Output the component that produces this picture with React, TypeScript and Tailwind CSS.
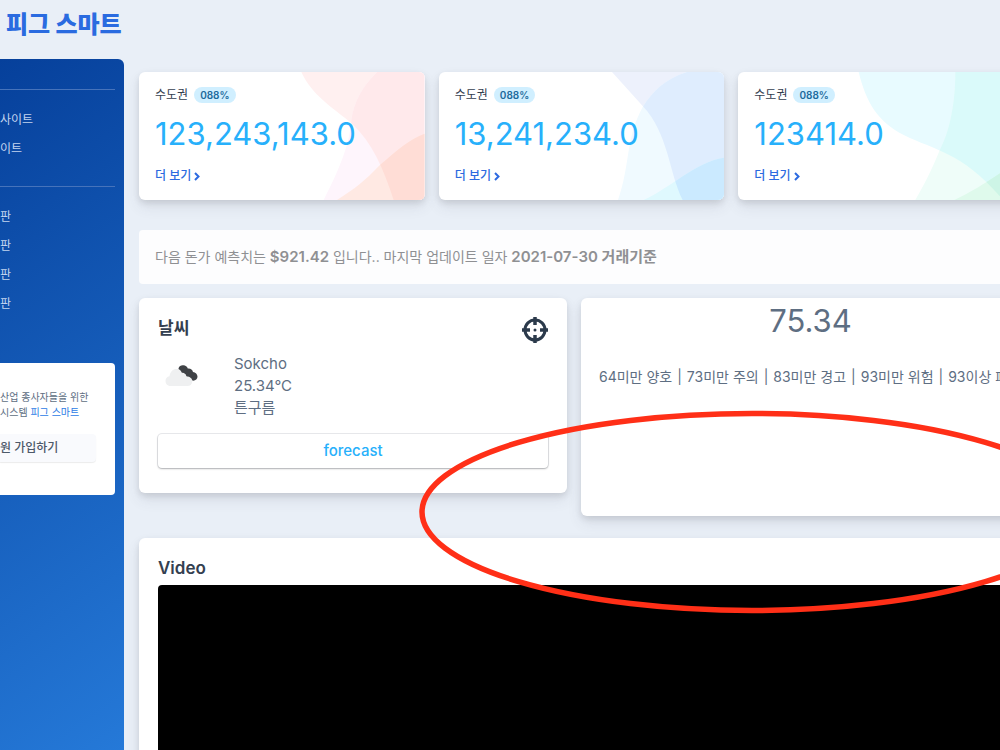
import React from 'react';

interface Wave {
  id: string;
  outer: string;
  inner: string;
  corner: string;
  // outer, inner, outer+inner, corner, corner+outer
  colors: [string, string, string, string, string];
}

interface Stat {
  value: string;
  wave: Wave;
}

const stats: Stat[] = [
  {
    value: '123,243,143.0',
    wave: {
      id: 'wave-red',
      outer: 'M488 0C520 70 580 105 640 155C700 210 735 290 765 384H858V0Z',
      inner: 'M715 0C670 45 645 90 638 145C632 230 590 315 555 384H858V0Z',
      corner: 'M595 384C650 350 680 325 723 280C775 235 815 200 858 185V384Z',
      colors: ['#fff0f0', '#fef5fc', '#ffe9eb', '#ffe9e3', '#ffddd6'],
    },
  },
  {
    value: '13,241,234.0',
    wave: {
      id: 'wave-blue',
      outer: 'M520 0L612 102C690 185 690 300 732 384H858V0Z',
      inner: 'M745 0C680 20 640 60 612 105C560 200 575 280 538 384H858V0Z',
      corner: 'M615 384C700 345 770 270 858 257V384Z',
      colors: ['#edf1fc', '#f0faff', '#dfedfe', '#dff9fe', '#cbeaff'],
    },
  },
  {
    value: '123414.0',
    wave: {
      id: 'wave-green',
      outer: 'M363 0C385 90 420 150 500 190C590 235 670 240 786 372L800 384H858V0Z',
      inner: 'M653 0C653 110 630 190 608 230C580 300 555 345 533 384H858V0Z',
      corner: 'M650 384C700 360 740 335 785 305L858 265V384Z',
      colors: ['#e8fbff', '#effdf9', '#dafafa', '#dffaec', '#cdf5e6'],
    },
  },
];

const siteLinks = ['사이트', '이트'];
const boardLinks = ['판', '판', '판', '판'];
const levels = ['64미만 양호', '73미만 주의', '83미만 경고', '93미만 위험', '93이상 폐사'];

function CardWave({ wave }: { wave: Wave }) {
  const clip = `url(#${wave.id})`;
  return (
    <svg
      className="absolute inset-0 h-full w-full"
      viewBox="0 0 858 384"
      preserveAspectRatio="xMaxYMid slice"
      aria-hidden="true"
    >
      <clipPath id={wave.id}>
        <path d={wave.outer} />
      </clipPath>
      <path d={wave.outer} fill={wave.colors[0]} />
      <path d={wave.inner} fill={wave.colors[1]} />
      <path d={wave.inner} fill={wave.colors[2]} clipPath={clip} />
      <path d={wave.corner} fill={wave.colors[3]} />
      <path d={wave.corner} fill={wave.colors[4]} clipPath={clip} />
    </svg>
  );
}

function Card({ className = '', children }: { className?: string; children: React.ReactNode }) {
  return (
    <section
      className={`rounded-md bg-white shadow-[0_7px_14px_rgba(65,69,88,0.1),0_3px_6px_rgba(0,0,0,0.1)] ${className}`}
    >
      {children}
    </section>
  );
}

function StatCard({ value, wave }: Stat) {
  return (
    <Card className="relative h-32 overflow-hidden">
      <CardWave wave={wave} />
      <div className="relative flex h-full flex-col px-4 pt-[13px]">
        <h6 className="flex items-center gap-[6px] text-xs leading-5 text-[#344050]">
          수도권
          <span className="rounded-full bg-[#d0efff] px-[6px] text-[10px] leading-4 font-semibold text-[#1c6a9c]">
            088%
          </span>
        </h6>
        <p className="mt-2 text-[31px] leading-[42px] text-[#27b0fb]">{value}</p>
        <a href="#more" className="mt-[11px] flex items-center gap-[3px] text-xs leading-5 font-medium text-[#2c6ae0]">
          더 보기
          <svg className="h-[9px] w-[6px]" viewBox="0 0 6 9" fill="none" stroke="currentColor" strokeWidth="2" aria-hidden="true">
            <path d="M1 1L4.500 4.500L1 8" />
          </svg>
        </a>
      </div>
    </Card>
  );
}

function Sidebar() {
  return (
    <aside className="flex w-[124px] shrink-0 flex-col overflow-hidden rounded-tr-md bg-linear-[145deg] from-[#06409b] to-[#2579d8] pr-[9px] text-[#c3d5ef]">
      <hr className="mt-[30px] border-[#4673bb]" />
      <nav className="mt-[15px] flex flex-col text-xs">
        {siteLinks.map((label) => (
          <a key={label} href="#site" className="leading-[29px]">
            {label}
          </a>
        ))}
        <hr className="mt-[23px] mb-[15px] border-[#4673bb]" />
        {boardLinks.map((label, i) => (
          <a key={i} href="#board" className="leading-[29px]">
            {label}
          </a>
        ))}
      </nav>

      {/* Sign-up box */}
      <div className="mt-[45px] h-[132px] shrink-0 rounded-r bg-white pt-[27px] text-[#5e6e82]">
        <p className="text-[10px] leading-[15px] whitespace-nowrap">
          산업 종사자들을 위한
          <br />
          시스템{' '}
          <a href="#pig" className="text-[#2c7be5]">
            피그 스마트
          </a>
        </p>
        <button className="mt-[14px] block h-7 w-24 rounded-r bg-[#f9fafd] text-left text-xs font-medium whitespace-nowrap text-[#4d5969] shadow-[0_1px_1px_rgba(0,0,0,0.08)]">
          원 가입하기
        </button>
      </div>
    </aside>
  );
}

function CrosshairIcon() {
  return (
    <svg className="h-[26px] w-[26px]" viewBox="0 0 26 26" fill="none" stroke="#2b3a4b" aria-hidden="true">
      <circle cx="13" cy="13" r="10" strokeWidth="3" />
      <path d="M13 0V8M13 18V26M0 13H8M18 13H26" strokeWidth="3.500" />
      <circle cx="13" cy="13" r="1.500" fill="#2b3a4b" stroke="none" />
    </svg>
  );
}

function CloudIcon() {
  return (
    <svg className="mt-3 h-[22px] w-[34px]" viewBox="0 0 34 22" aria-hidden="true">
      <path
        d="M14.500 3.500C15 .8 17.500 0 19.500 .300C21.500 .4 23 1.500 23.800 3.500C26.500 3.200 28.500 4.500 29 7C31.500 7.300 33.500 9.300 33.500 11.800C33.500 14.300 31.200 16 28.500 15.600C26.500 15.300 25.500 14 25 12.800C23 12.800 22 11.500 21.500 9.500C19.500 9.800 18.300 9.300 17.800 8C15.800 7.500 14.500 5.500 14.500 3.500Z"
        fill="#3f4246"
      />
      <path
        d="M5.500 21A5 5 0 0 1 5.500 11.200C6.200 6.500 9 3.800 13 4C15.500 4.100 17 5.500 17.800 7.800C20.500 7.500 22 9.500 22.500 11.500C26 11.500 28.500 13.500 28.300 16.500C28 19.500 26 21 23.500 21Z"
        fill="#eff0f1"
      />
    </svg>
  );
}

function WeatherCard() {
  return (
    <Card className="h-[195px] px-[19px] pt-[18px]">
      <div className="flex items-start justify-between">
        <h5 className="text-[17px] leading-6 font-semibold text-[#344050]">날씨</h5>
        <button aria-label="현재 위치" className="mt-px">
          <CrosshairIcon />
        </button>
      </div>
      <div className="mt-[10px] flex gap-9 pl-[6px]">
        <CloudIcon />
        <p className="text-[15px] leading-[22px] text-[#5e6e82]">
          Sokcho
          <br />
          25.34°C
          <br />
          튼구름
        </p>
      </div>
      <button className="mt-[15px] h-[34px] w-full rounded bg-white text-[15px] font-medium text-[#27b0fb] shadow-[0_0_0_1px_rgba(43,45,80,0.1),0_1px_2px_rgba(0,0,0,0.25)]">
        forecast
      </button>
    </Card>
  );
}

export default function App() {
  return (
    <div className="relative flex h-screen flex-col overflow-hidden bg-[#e9eff7] font-['Inter','Noto_Sans_CJK_KR',sans-serif]">
      <header className="h-[59px] shrink-0 px-[6px] pt-[7px]">
        <h1 className="text-2xl leading-9 font-extrabold text-[#2a6be0]">피그 스마트</h1>
      </header>

      <div className="flex min-h-0 flex-1">
        <Sidebar />

        <main className="-mr-6 flex min-w-0 flex-1 flex-col pt-[13px] pl-[15px]">
          <div className="grid shrink-0 grid-cols-3 gap-[14px]">
            {stats.map((stat) => (
              <StatCard key={stat.value} {...stat} />
            ))}
          </div>

          <p className="mt-[30px] h-[54px] shrink-0 rounded bg-[#fdfdfe] px-4 text-sm leading-[54px] text-[#8f9093]">
            다음 돈가 예측치는 <b className="text-[15px] font-semibold">$921.42</b> 입니다.. 마지막 업데이트 일자{' '}
            <b className="text-[15px] font-semibold">2021-07-30 거래기준</b>
          </p>

          <div className="mt-[14px] -mr-4 grid shrink-0 grid-cols-[428fr_459fr] items-start gap-[14px]">
            <WeatherCard />
            <Card className="h-[218px] px-[18px] text-center whitespace-nowrap text-[#5e6e82]">
              <p className="text-[31px] leading-[46px]">75.34</p>
              <p className="mt-[22px] flex gap-[5px] text-sm leading-[22px]">
                {levels.map((level, i) => (
                  <React.Fragment key={level}>
                    {i > 0 && <span>|</span>}
                    <span>{level}</span>
                  </React.Fragment>
                ))}
              </p>
            </Card>
          </div>

          <Card className="mt-[22px] -mb-4 flex-1 px-[19px] pt-[18px]">
            <h5 className="text-[17px] leading-6 font-semibold text-[#344050]">Video</h5>
            <div className="mt-[5px] h-full rounded-t-sm bg-black" />
          </Card>
        </main>
      </div>

      {/* Hand-drawn marker over the page */}
      <svg
        className="pointer-events-none absolute top-0 left-0 h-[750px] w-[1100px] max-w-none"
        viewBox="0 0 1100 750"
        fill="none"
        aria-hidden="true"
      >
        <ellipse cx="752" cy="512" rx="330" ry="98.500" stroke="#ff2f17" strokeWidth="5.500" />
      </svg>
    </div>
  );
}
